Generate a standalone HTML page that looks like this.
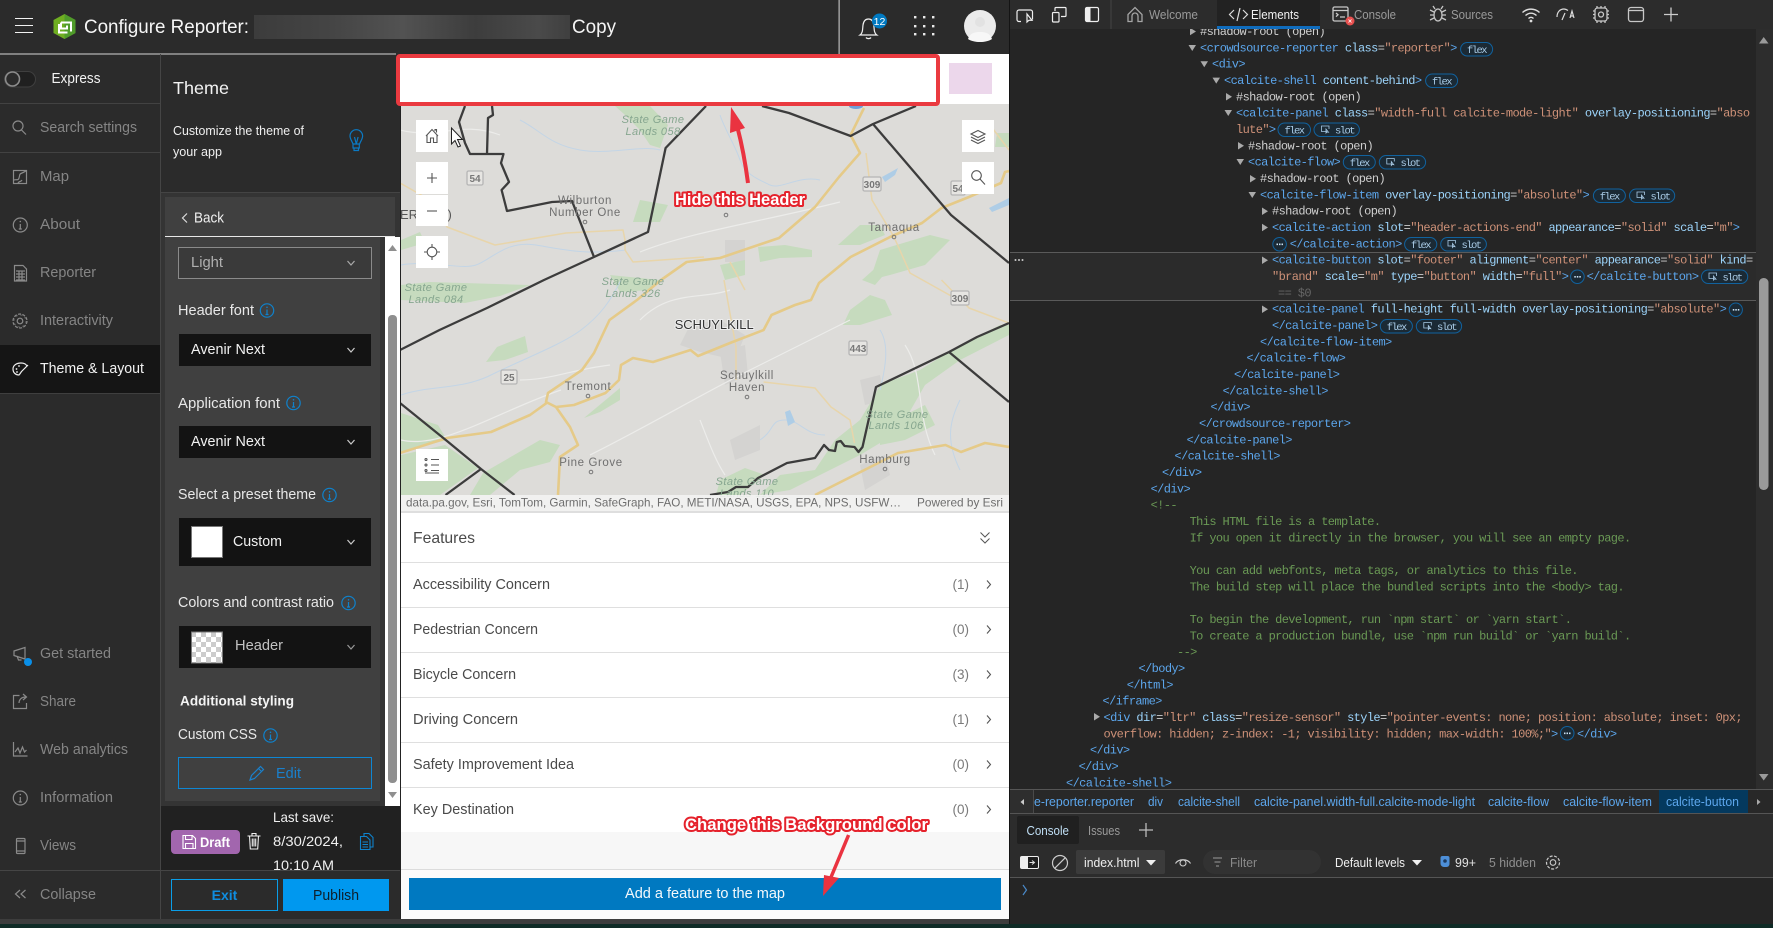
<!DOCTYPE html>
<html lang="en"><head><meta charset="utf-8"><title>Configure Reporter</title>
<style>
html,body{margin:0;padding:0;background:#252525;overflow:hidden;width:1773px;height:928px}
svg{display:block}
text{font-family:"Liberation Sans",sans-serif;white-space:pre}
.n{font-size:14.5px;fill:#858585}
.w{fill:#f2f2f2;font-size:14.5px}
.lb{fill:#e8e8e8;font-size:14.5px}
.m{font-family:"Liberation Mono",monospace;font-size:12px;letter-spacing:-.62px;fill:#cfcfcf;transform:translateY(-.6px)}
.t{fill:#5ca6ec}.a{fill:#9cd4fb}.v{fill:#ce9178}.c{fill:#6a9955}
.pt{font-family:"Liberation Mono",monospace;font-size:10.5px;letter-spacing:-1.55px;fill:#a9cbe6}
.p{fill:#1b2a35;stroke:#11629e;stroke-width:1}
.ml{font-size:11.5px;fill:#6f6f6f;letter-spacing:.6px}
.gl{font-size:11px;fill:#86a68f;font-style:italic;letter-spacing:.4px}
.sh{font-size:10px;font-weight:bold;fill:#777;text-anchor:middle}
.r{font-size:14.5px;fill:#4a4a4a}
.ct{font-size:14px;fill:#7a7a7a}
.an{font-size:16.5px;font-weight:bold;fill:#fff;stroke:#e5222c;stroke-width:4px;paint-order:stroke;stroke-linejoin:round}
.ic{fill:none;stroke:#8a8a8a;stroke-width:1.2}
.iw{fill:none;stroke:#eee;stroke-width:1.2}
.id{fill:none;stroke:#c8c8c8;stroke-width:1.3}
.mp{fill:none;stroke:#555;stroke-width:1.1}
.ib{fill:none;stroke:#0f82cc;stroke-width:1.2}
.h{fill:none;stroke:#e5ca88;stroke-width:2.6;stroke-linejoin:round}
.h2{fill:none;stroke:#e8d5aa;stroke-width:1.5;stroke-linejoin:round}
.bd{fill:none;stroke:#3c3c3c;stroke-width:2.3;stroke-linejoin:round}
.riv{fill:none;stroke:#c3d5e6;stroke-width:1}
.rd{fill:none;stroke:#ececea;stroke-width:1.2}
.gp{fill:#c6dbbe}
.twn{fill:#d4d3d1}
.dt{fill:#aaa}
.tab{font-size:12.5px;fill:#9a9a9a}
.d{font-size:12.5px;fill:#5ca6ec}
</style></head>
<body>
<svg width="1773" height="928" viewBox="0 0 1773 928" xmlns="http://www.w3.org/2000/svg">
<defs>
<linearGradient id="blr" x1="0" x2="1" y1="0" y2="0"><stop offset="0" stop-color="#3c3c3c"/><stop offset=".25" stop-color="#454545"/><stop offset=".47" stop-color="#525252"/><stop offset=".7" stop-color="#3d3d3d"/><stop offset=".9" stop-color="#4a4a4a"/><stop offset="1" stop-color="#3f3f3f"/></linearGradient>
<pattern id="chk" width="10" height="10" patternUnits="userSpaceOnUse" x="191" y="632"><rect width="10" height="10" fill="#fff"/><rect width="5" height="5" fill="#ccc"/><rect x="5" y="5" width="5" height="5" fill="#ccc"/></pattern>
<path id="td" d="M0 0h7.5l-3.75 6z" fill="#aaa"/>
<path id="tr" d="M0 0l6 3.75l-6 3.75z" fill="#aaa"/>
<clipPath id="mapc"><rect x="401" y="104" width="608" height="409"/></clipPath>
<clipPath id="sv"><rect x="161" y="806" width="239" height="64"/></clipPath>
</defs>

<!-- base -->
<rect width="1773" height="928" fill="#252525"/>
<rect y="0" width="1009" height="919" fill="#2b2b2b"/>

<!-- top header -->
<rect width="1009" height="54" fill="#2b2b2b"/>
<rect x="0" y="53.5" width="396" height="1" fill="#d4d4d4"/>
<path d="M15 18.5h18M15 25.5h18M15 32.5h18" stroke="#f2f2f2" stroke-width="1.1"/>
<polygon points="64.5,14 75.5,20 75.5,33 64.5,39 53.5,33 53.5,20" fill="#6fae21"/>
<polygon points="64.5,14 75.5,20 75.5,33 64.5,39" fill="#4f9b2a"/>
<path d="M61 22.5h10v9M59 24v8.5h8.5M61 22.5v6h6v-3" fill="none" stroke="#fff" stroke-width="2"/>
<text x="84" y="33" font-size="19.5" fill="#f6f6f6" textLength="165" lengthAdjust="spacingAndGlyphs">Configure Reporter:</text>
<rect x="254" y="15" width="316" height="24" fill="url(#blr)"/>
<text x="572" y="33" font-size="19.5" fill="#f4f4f4" textLength="44" lengthAdjust="spacingAndGlyphs">Copy</text>
<rect x="838.6" y="0" width="1" height="54" fill="#d8d8d8"/>
<path d="M860 35c3-2 2.500-6 3-10 .6-4 2.500-6 5.500-6s4.700 2 5.300 6c.5 4 0 8 3 10zM866 37.500c1 1.500 4 1.500 5 0" fill="none" stroke="#f0f0f0" stroke-width="1.200"/>
<circle cx="879.5" cy="21" r="7.5" fill="#0079c1"/>
<text x="879.5" y="24.8" font-size="10.5" fill="#fff" text-anchor="middle">12</text>
<g fill="#eaeaea"><rect x="914" y="16" width="2.4" height="2.4"/><rect x="923" y="16" width="2.4" height="2.4"/><rect x="932" y="16" width="2.4" height="2.4"/><rect x="914" y="25" width="2.4" height="2.4"/><rect x="923" y="25" width="2.4" height="2.4"/><rect x="932" y="25" width="2.4" height="2.4"/><rect x="914" y="33" width="2.4" height="2.4"/><rect x="923" y="33" width="2.4" height="2.4"/><rect x="932" y="33" width="2.4" height="2.4"/></g>
<circle cx="980" cy="26" r="16" fill="#ebebeb"/>
<path d="M968 39c2-6 7-7 12-7s10 1 12 7c-6 4-18 4-24 0z" fill="#f7f7f7"/>
<circle cx="980" cy="22" r="5" fill="#e2e2e2"/>

<!-- left nav -->
<rect x="160" y="54" width="1" height="865" fill="#454545"/>
<rect x="0" y="103" width="160" height="1" fill="#424242"/>
<rect x="0" y="152" width="160" height="1" fill="#424242"/>
<rect x="4.5" y="71.5" width="31" height="15.5" rx="7.7" fill="#202020" stroke="#3f3f3f"/>
<circle cx="12.5" cy="79" r="7" fill="#2b2b2b" stroke="#8c8c8c" stroke-width="1.6"/>
<text x="51.500" y="83" class="w" textLength="49" lengthAdjust="spacingAndGlyphs">Express</text>
<circle cx="18" cy="126" r="5" class="ic"/><path d="M21.5 130l4.5 4.5" class="ic"/>
<text x="40" y="132" class="n" textLength="97" lengthAdjust="spacingAndGlyphs">Search settings</text>
<rect x="13.5" y="170.5" width="13" height="13" class="ic"/><path d="M14 180c3-1 4 1 5-2s0-4 3-5 3-2 4-2M18 183c1-2 3-1 4-3" class="ic"/>
<text x="40" y="181" class="n" textLength="29" lengthAdjust="spacingAndGlyphs">Map</text>
<circle cx="20.3" cy="225" r="7" class="ic"/><path d="M20.3 224v5M18.8 229h3" class="ic"/><circle cx="20.3" cy="221.5" r=".8" fill="#8a8a8a"/>
<text x="40" y="229" class="n" textLength="40" lengthAdjust="spacingAndGlyphs">About</text>
<path d="M14.5 265.5h8.5l3.5 3.5v12h-12z" class="ic"/><path d="M16 271h9M16 274h9M16 277h9M16 280h9M19 271v9M22 271v9" class="ic" stroke-width=".8"/>
<text x="40" y="277" class="n" textLength="56" lengthAdjust="spacingAndGlyphs">Reporter</text>
<circle cx="20" cy="321" r="2.8" class="ic"/><circle cx="20" cy="321" r="6" class="ic" stroke-width="3.2" stroke-dasharray="2.4 2.3" opacity=".45"/><circle cx="20" cy="321" r="7" class="ic" stroke-dasharray="3 1.4"/>
<text x="40" y="325" class="n" textLength="73" lengthAdjust="spacingAndGlyphs">Interactivity</text>
<rect x="0" y="345" width="160" height="48" fill="#151515"/>
<path d="M13 369c0-4 4-6 8-6 3 0 5 1 6 3l-5 5c-1 1-2 3-3 4-3 0-6-2-6-6zM21 372l7-7" class="iw"/><circle cx="16.5" cy="369" r=".9" fill="#eee"/><circle cx="19" cy="366" r=".9" fill="#eee"/><circle cx="17" cy="372" r=".9" fill="#eee"/>
<text x="40" y="373" class="w" textLength="104" lengthAdjust="spacingAndGlyphs">Theme &amp; Layout</text>
<rect x="0" y="393" width="160" height="1" fill="#3f3f3f"/>
<path d="M14 651l11-3.500v11.500l-11-3.500zM17 656l1.500 4h3" class="ic"/>
<circle cx="28" cy="662" r="4" fill="#0a8fe8"/>
<text x="40" y="658" class="n" textLength="71" lengthAdjust="spacingAndGlyphs">Get started</text>
<path d="M26.500 703v5.500h-13v-13h6" class="ic"/><path d="M19 703c0-3 2-6 7-6M23 694l3.500 3-3.500 3" class="ic"/>
<text x="40" y="706" class="n" textLength="36" lengthAdjust="spacingAndGlyphs">Share</text>
<path d="M13.500 742v14h14M15 752l3-4 2 5 2.500-6 2 5 2-2" class="ic"/>
<text x="40" y="754" class="n" textLength="88" lengthAdjust="spacingAndGlyphs">Web analytics</text>
<circle cx="20.3" cy="798" r="7" class="ic"/><path d="M20.3 797v5M18.8 802h3" class="ic"/><circle cx="20.3" cy="794.5" r=".8" fill="#8a8a8a"/>
<text x="40" y="802" class="n" textLength="73" lengthAdjust="spacingAndGlyphs">Information</text>
<rect x="16.5" y="838.5" width="8.5" height="15" rx="1" class="ic"/><path d="M16.500 841h8.500M16.500 851h8.500" class="ic"/>
<text x="40" y="850" class="n" textLength="36" lengthAdjust="spacingAndGlyphs">Views</text>
<rect x="0" y="870" width="400" height="1" fill="#454545"/>
<path d="M20 890l-4.500 4 4.500 4M25.500 890l-4.500 4 4.500 4" class="ic"/>
<text x="40" y="899" class="n" textLength="56" lengthAdjust="spacingAndGlyphs">Collapse</text>

<!-- theme column -->
<text x="173" y="94" font-size="17.5" fill="#f2f2f2" textLength="56" lengthAdjust="spacingAndGlyphs">Theme</text>
<text x="173" y="135" font-size="13" fill="#efefef" textLength="131" lengthAdjust="spacingAndGlyphs">Customize the theme of</text>
<text x="173" y="156" font-size="13" fill="#efefef" textLength="49" lengthAdjust="spacingAndGlyphs">your app</text>
<path d="M353 144c-1-3-3-5-3-8a6.300 6.300 0 0 1 12.600 0c0 3-2 5-3 8zM353 144v4h6.300v-4M354 148v2.500h4.500v-2.500M354.500 137l1.800 7 1.800-7" fill="none" stroke="#0b7ac4" stroke-width="1.200"/>
<rect x="161" y="192" width="239" height="1" fill="#444"/>
<rect x="161" y="193" width="239" height="613" fill="#343434"/>
<rect x="165" y="197" width="230" height="39" fill="#404040"/>
<rect x="165" y="236" width="230" height="1" fill="#e8e8e8"/>
<path d="M187 213.500l-4.500 4.500 4.500 4.500" fill="none" stroke="#ddd" stroke-width="1.200"/>
<text x="194" y="222.500" font-size="14.500" fill="#f0f0f0" textLength="30" lengthAdjust="spacingAndGlyphs">Back</text>
<rect x="165" y="237" width="215" height="564" fill="#404040"/>
<rect x="385" y="237" width="15" height="569" fill="#fff"/>
<rect x="388" y="315" width="9" height="468" rx="4" fill="#8f8f8f"/>
<polygon points="392.500,245 397,251 388,251" fill="#8f8f8f"/>
<polygon points="388,792 397,792 392.500,798" fill="#8f8f8f"/>

<rect x="178.500" y="247.500" width="193" height="31" fill="#3a3a3a" stroke="#8a8a8a"/>
<text x="191" y="267" font-size="14.500" fill="#b0b0b0" textLength="32" lengthAdjust="spacingAndGlyphs">Light</text>
<path d="M347.500 261l3.500 4 3.500-4" fill="none" stroke="#aaa" stroke-width="1.200"/>

<text x="178" y="315" class="lb" textLength="76" lengthAdjust="spacingAndGlyphs">Header font</text>
<circle cx="267" cy="310.500" r="6.700" class="ib"/><path d="M267 309.500v5M265.500 314.500h3" class="ib"/><circle cx="267" cy="307.300" r=".8" fill="#0f82cc"/>
<rect x="179" y="334" width="192" height="32" fill="#131313"/>
<text x="191" y="354" font-size="14.500" fill="#f2f2f2" textLength="74" lengthAdjust="spacingAndGlyphs">Avenir Next</text>
<path d="M347.500 348l3.500 4 3.500-4" fill="none" stroke="#ccc" stroke-width="1.200"/>

<text x="178" y="408" class="lb" textLength="102" lengthAdjust="spacingAndGlyphs">Application font</text>
<circle cx="293.500" cy="403" r="6.700" class="ib"/><path d="M293.500 402v5M292 407h3" class="ib"/><circle cx="293.500" cy="399.800" r=".8" fill="#0f82cc"/>
<rect x="179" y="426" width="192" height="32" fill="#131313"/>
<text x="191" y="446" font-size="14.500" fill="#f2f2f2" textLength="74" lengthAdjust="spacingAndGlyphs">Avenir Next</text>
<path d="M347.500 440l3.500 4 3.500-4" fill="none" stroke="#ccc" stroke-width="1.200"/>

<text x="178" y="499" class="lb" textLength="138" lengthAdjust="spacingAndGlyphs">Select a preset theme</text>
<circle cx="329.500" cy="495" r="6.700" class="ib"/><path d="M329.500 494v5M328 499h3" class="ib"/><circle cx="329.500" cy="491.800" r=".8" fill="#0f82cc"/>
<rect x="179" y="518" width="192" height="48" fill="#131313"/>
<rect x="191.500" y="526.500" width="31" height="31" fill="#fff" stroke="#777"/>
<text x="233" y="546" font-size="14.500" fill="#f2f2f2" textLength="49" lengthAdjust="spacingAndGlyphs">Custom</text>
<path d="M347.500 540l3.500 4 3.500-4" fill="none" stroke="#ccc" stroke-width="1.200"/>

<text x="178" y="607" class="lb" textLength="156" lengthAdjust="spacingAndGlyphs">Colors and contrast ratio</text>
<circle cx="348.500" cy="603" r="6.700" class="ib"/><path d="M348.500 602v5M347 607h3" class="ib"/><circle cx="348.500" cy="599.800" r=".8" fill="#0f82cc"/>
<rect x="179" y="626" width="192" height="42" fill="#131313"/>
<rect x="191.500" y="632" width="31" height="31" fill="url(#chk)" stroke="#777"/>
<text x="235" y="650" font-size="14.500" fill="#c2c2c2" textLength="48" lengthAdjust="spacingAndGlyphs">Header</text>
<path d="M347.500 645l3.500 4 3.500-4" fill="none" stroke="#999" stroke-width="1.200"/>

<text x="180" y="705.500" font-size="14" font-weight="bold" fill="#f4f4f4" textLength="114" lengthAdjust="spacingAndGlyphs">Additional styling</text>
<text x="178" y="739" class="lb" textLength="79" lengthAdjust="spacingAndGlyphs">Custom CSS</text>
<circle cx="270.500" cy="735.500" r="6.700" class="ib"/><path d="M270.500 734.500v5M269 739.500h3" class="ib"/><circle cx="270.500" cy="732.300" r=".8" fill="#0f82cc"/>
<rect x="178.500" y="757.500" width="193" height="31" fill="none" stroke="#0e87d4"/>
<path d="M250 780l1.500-4.500 9-9 3 3-9 9zM258.500 768.500l3 3" fill="none" stroke="#1a80cc" stroke-width="1.200"/>
<text x="276" y="778" font-size="14.500" fill="#1a80cc" textLength="25" lengthAdjust="spacingAndGlyphs">Edit</text>

<!-- draft -->
<rect x="161" y="806" width="239" height="64" fill="#212121"/>
<rect x="171" y="830" width="69" height="24" rx="4" fill="#a266ae"/>
<path d="M183 835.500h9.500l3 3v10h-12.500zM185.500 835.500v4h6.500v-4M185.500 848.500v-5h7.500v5" fill="none" stroke="#fff" stroke-width="1.100"/>
<text x="200" y="847" font-size="14" font-weight="bold" fill="#fff" textLength="30" lengthAdjust="spacingAndGlyphs">Draft</text>
<path d="M247.500 836h13M252 836v-2.500h4v2.500M249.500 836l.8 13h7.400l.8-13M252.300 838.500v8M254 838.500v8M255.700 838.500v8" fill="none" stroke="#eee" stroke-width="1.100"/>
<g clip-path="url(#sv)">
<text x="273" y="822" font-size="14" fill="#f0f0f0" textLength="61" lengthAdjust="spacingAndGlyphs">Last save:</text>
<text x="273" y="846" font-size="14" fill="#f0f0f0" textLength="70" lengthAdjust="spacingAndGlyphs">8/30/2024,</text>
<text x="273" y="870" font-size="14" fill="#f0f0f0" textLength="61" lengthAdjust="spacingAndGlyphs">10:10 AM</text>
</g>
<path d="M364 836v-2.500h5l4 4v9.500h-3M360.500 836.500h6l3.500 3.500v9.500h-9.500zM362.500 842h5.500M362.500 844.500h5.500M362.500 847h5.500" fill="none" stroke="#0f82cc" stroke-width="1.100"/>

<!-- footer -->
<rect x="171.500" y="879.500" width="106" height="31" fill="none" stroke="#0a9ee8"/>
<text x="224.500" y="900" font-size="14" font-weight="bold" fill="#0f8de0" text-anchor="middle">Exit</text>
<rect x="283" y="879" width="106" height="32" fill="#0098ef"/>
<text x="313" y="900" font-size="14.500" fill="#0e1e2a" textLength="46" lengthAdjust="spacingAndGlyphs">Publish</text>

<!-- map -->
<rect x="400" y="54" width="1" height="865" fill="#222"/>
<rect x="401" y="54" width="608" height="865" fill="#fff"/>
<g clip-path="url(#mapc)">
<rect x="401" y="104" width="608" height="409" fill="#dddcd9"/>
<polygon class="twn" points="690,325 720,320 745,335 735,360 700,352 680,345"/>
<polygon class="twn" points="720,352 745,345 748,375 725,385"/>
<polygon class="twn" points="725,240 745,240 745,262 725,262"/>
<polygon class="twn" points="860,380 880,375 885,400 865,405"/>
<polygon class="twn" points="730,440 760,425 760,450 735,460"/>
<polygon class="twn" points="860,465 885,455 890,475 865,490"/>
<polygon class="gp" points="615,106 650,106 668,125 660,148 650,145 640,130 625,115"/>
<polygon class="gp" points="401,413 438,425 447,440 401,452"/>
<polygon class="gp" points="401,455 445,445 478,468 440,495 401,495"/>
<polygon class="gp" points="483,473 540,440 560,445 550,462 520,470 490,495 470,495"/>
<polygon class="gp" points="497,347 525,336 528,352 505,360 486,362"/>
<polygon class="gp" points="584,418 620,388 620,400 600,412"/>
<polygon class="gp" points="815,470 835,440 860,420 875,395 880,385 920,370 955,348 1000,325 1009,325 1009,335 960,360 925,385 905,420 885,440 860,455 830,470 790,490 760,495 780,475"/>
<polygon class="gp" points="843,325 850,310 870,295 885,300 892,315 860,325"/>
<polygon class="gp" points="838,245 860,225 880,225 885,235 860,245"/>
<polygon class="gp" points="880,250 930,235 950,240 925,265 890,275 870,280"/>
<polygon class="gp" points="758,247 785,245 812,250 812,257 780,258 760,262"/>
<polygon class="gp" points="401,285 430,282 530,285 500,296 465,303 401,300"/>
<polygon class="gp" points="610,275 660,280 650,290 620,292"/>
<polygon class="gp" points="997,133 1009,133 1009,147 995,147"/>
<polygon class="gp" points="716,495 720,480 745,468 765,475 740,495"/>
<polygon class="gp" points="633,222 640,200 668,205 660,222"/>
<polygon class="gp" points="720,265 745,260 745,275 725,280"/>
<polygon class="gp" points="862,280 890,255 895,262 875,285"/>
<polygon class="gp" points="401,240 420,232 425,243 401,250"/>
<polygon class="gp" points="880,430 905,415 925,405 935,425 905,440 880,445"/>
<path class="riv" d="M401 265c30-5 60 5 75 0s30-25 60-20 50 10 90 5M520 120c20 10 30 25 60 30s60-5 80 0M720 115c5 15 15 30 20 45s20 20 30 25 30-10 50-5M401 395c30-10 60-5 90-20s70-30 90-45 30-30 40-50M760 440c15-10 10-20 25-20s20 15 40 15M880 330c10 15 5 40 0 60M960 400c-10 20-15 40 0 70"/>
<path class="rd" d="M401 440c40 10 100-30 160-50M590 455c60-30 110-60 160-85 40-20 70-35 100-50M700 420c8 20 15 40 25 55M640 252c50-20 120-30 200-50M520 380c30 0 50-10 90-15M400 130c40 10 60-10 100 5M905 345c20 30 10 70 30 110M640 320c30-30 60-20 90-30"/>
<polygon points="882,177 898,168 895,175 885,182" fill="#aecde6"/>
<polygon points="989,208 1009,198 1009,205 992,212" fill="#aecde6"/>
<polygon points="785,412 790,410 795,422 788,426" fill="#aecde6"/>
<ellipse cx="856" cy="106" rx="7" ry="3" fill="#6f9fd8"/>

<path class="h2" d="M400 183L430 200L447 227L495 245L566 233L623 230L625 240L625 250L633 262L704 257"/>
<path class="h2" d="M763.600 382L815 388L831 407L850 420L854.500 443"/>
<path class="h2" d="M724 280L736 347L736 380M941.500 280L969 308L1009 323M866 153L872 200L894 237L910 273L953 297M730 262L745 290M990 125L1009 150"/>
<path class="h" d="M864 108L850.600 135L860 153L839 177L815 207L779 238L720 258L686.600 262L661 280L637 300L609.500 320L594 353L582 370L548 393L546 402L556 407L574 405L605.500 393L619 380L621 365L633 358L653 362L690.500 350L698 356L730 343L763.600 330L771.500 315L795 305L811 300L819 283L850.600 257L890 237L922 223L941.500 208L969 197L1001 183L1005 172L1009 171"/>
<path class="h" d="M556 407L570 427L578 445L560 457L558 495M548 402L530 415L491 432L447 438L400 453M1009 447L985 443L961 452L945.500 445L898 453L815 495"/>

<path class="bd" d="M465 106L459 122L465 143L470 154L503.500 154L501 163L509 182L501.600 190L507 211L552 202L572 201L594 257"/>
<path class="bd" d="M492 106L493 115L488 118L487 154"/>
<path class="bd" d="M706 106L665.600 148L648 232L594 257L544 280L487 308L439.500 330L400 350"/>
<path class="bd" d="M762 106L789 113L850.600 136L873 124L916 106"/>
<path class="bd" d="M873 124L951 215L1009 263"/>
<path class="bd" d="M400 403L447 441L481 469L514.600 495"/>
<path class="bd" d="M481 469L445.500 495"/>
<path class="bd" d="M1009 323L977 337L949 352L876 387L862.500 447L858.500 452L854.500 447L844.600 446L840.700 441L836.800 442L835 451L829 450L824 445L815 458L787 463L758 478L748 487L736 487L728 492L710 495"/>
<path class="bd" d="M949 352L1009 402"/>

<text x="653" y="123" class="gl" text-anchor="middle">State Game</text>
<text x="653" y="135" class="gl" text-anchor="middle">Lands 058</text>
<text x="436" y="291" class="gl" text-anchor="middle">State Game</text>
<text x="436" y="303" class="gl" text-anchor="middle">Lands 084</text>
<text x="633" y="285" class="gl" text-anchor="middle">State Game</text>
<text x="633" y="297" class="gl" text-anchor="middle">Lands 326</text>
<text x="897" y="418" class="gl" text-anchor="middle">State Game</text>
<text x="896" y="429" class="gl" text-anchor="middle">Lands 106</text>
<text x="747" y="485" class="gl" text-anchor="middle">State Game</text>
<text x="747" y="497" class="gl" text-anchor="middle">Lands 110</text>
<text x="585" y="204" class="ml" text-anchor="middle">Wilburton</text>
<text x="585" y="216" class="ml" text-anchor="middle">Number One</text>
<text x="674.700" y="329" font-size="13" fill="#333" stroke="#eee" stroke-width="2" paint-order="stroke" textLength="79" lengthAdjust="spacingAndGlyphs">SCHUYLKILL</text>
<text x="894" y="231" class="ml" text-anchor="middle">Tamaqua</text>
<text x="588" y="390" class="ml" text-anchor="middle">Tremont</text>
<text x="747" y="379" class="ml" text-anchor="middle">Schuylkill</text>
<text x="747" y="391" class="ml" text-anchor="middle">Haven</text>
<text x="591" y="466" class="ml" text-anchor="middle">Pine Grove</text>
<text x="885" y="463" class="ml" text-anchor="middle">Hamburg</text>
<text x="400" y="219" font-size="13" fill="#555">ER</text>
<text x="447.500" y="219" font-size="13" fill="#555">)</text>
<circle cx="588" cy="396" r="1.800" fill="none" stroke="#777"/>
<circle cx="747" cy="397" r="1.800" fill="none" stroke="#777"/>
<circle cx="591" cy="472" r="1.800" fill="none" stroke="#777"/>
<circle cx="885" cy="469" r="1.800" fill="none" stroke="#777"/>
<circle cx="894" cy="237" r="1.800" fill="none" stroke="#777"/>
<circle cx="585" cy="222" r="1.800" fill="none" stroke="#777"/>
<circle cx="726" cy="215" r="1.800" fill="none" stroke="#777"/>

<g fill="#e6e5e2" stroke="#b5b5b5" stroke-width="1.300">
<rect x="467" y="171" width="16" height="14" rx="1.500"/>
<rect x="863" y="177" width="18" height="14" rx="1.500"/>
<rect x="951" y="181" width="14" height="14" rx="1.500"/>
<rect x="951" y="291" width="18" height="14" rx="1.500"/>
<rect x="849" y="341" width="18" height="14" rx="1.500"/>
<rect x="501" y="370" width="16" height="14" rx="1.500"/>
</g>
<text x="475" y="182" class="sh">54</text>
<text x="872" y="188" class="sh">309</text>
<text x="958" y="192" class="sh">54</text>
<text x="960" y="302" class="sh">309</text>
<text x="858" y="352" class="sh">443</text>
<text x="509" y="381" class="sh">25</text>

<rect x="401" y="495" width="608" height="16" fill="#f4f4f2" opacity=".88"/>
<text x="406" y="506.500" font-size="12" fill="#6e6e6e" textLength="495" lengthAdjust="spacingAndGlyphs">data.pa.gov, Esri, TomTom, Garmin, SafeGraph, FAO, METI/NASA, USGS, EPA, NPS, USFW…</text>
<text x="917" y="506.500" font-size="12" fill="#6e6e6e" textLength="86" lengthAdjust="spacingAndGlyphs">Powered by Esri</text>
<rect x="401" y="511" width="608" height="3" fill="#dedede"/>
</g>

<!-- map widgets -->
<g fill="#fff">
<rect x="416" y="120" width="32" height="32"/>
<rect x="416" y="162" width="32" height="32"/>
<rect x="416" y="195" width="32" height="31"/>
<rect x="416" y="236" width="32" height="32"/>
<rect x="416" y="449" width="32" height="32"/>
<rect x="962" y="120" width="32" height="32"/>
<rect x="962" y="162" width="32" height="32"/>
</g>
<path d="M426 136l6-6.500 6 6.500M427 135v7.500h3.500v-4.500h3v4.500h3.500v-7.500M435 131v-1.500h1.500v3" class="mp"/>
<path d="M432 173v10M427 178h10" class="mp"/>
<path d="M427 211h10" class="mp"/>
<circle cx="432" cy="252" r="4.800" class="mp"/><path d="M432 244v3M432 257v3M424 252h3M437 252h3" class="mp"/>
<circle cx="426" cy="459.500" r="1" class="mp"/><circle cx="426" cy="465" r="1" class="mp"/><circle cx="426" cy="470.500" r="1" class="mp"/><path d="M431 459.500h8M431 465h8M431 470.500h8M425 473h14" class="mp"/>
<path d="M978 130.500l7 3.500-7 3.500-7-3.500zM971 137l7 3.500 7-3.500M971 140l7 3.500 7-3.500" class="mp"/>
<circle cx="976.500" cy="175.500" r="4.800" class="mp"/><path d="M980 179l5 5.500" class="mp"/>
<path d="M451.500 128v16l3.500-3.500 3 6.500 2.500-1-3-6.500h5z" fill="#fff" stroke="#222" stroke-width="1"/>

<!-- features -->
<rect x="401" y="514" width="608" height="318" fill="#fff"/>
<text x="413" y="543" font-size="16" fill="#4a4a4a" textLength="62" lengthAdjust="spacingAndGlyphs">Features</text>
<path d="M980.500 532.500l4.500 4.500 4.500-4.500M980.500 538.500l4.500 4.500 4.500-4.500" fill="none" stroke="#555" stroke-width="1"/>
<g fill="#dfdfdf"><rect x="401" y="562" width="608" height="1"/><rect x="401" y="607" width="608" height="1"/><rect x="401" y="652" width="608" height="1"/><rect x="401" y="697" width="608" height="1"/><rect x="401" y="742" width="608" height="1"/><rect x="401" y="787" width="608" height="1"/></g>
<text x="413" y="589" class="r" textLength="137" lengthAdjust="spacingAndGlyphs">Accessibility Concern</text>
<text x="413" y="634" class="r" textLength="125" lengthAdjust="spacingAndGlyphs">Pedestrian Concern</text>
<text x="413" y="679" class="r" textLength="103" lengthAdjust="spacingAndGlyphs">Bicycle Concern</text>
<text x="413" y="724" class="r" textLength="105" lengthAdjust="spacingAndGlyphs">Driving Concern</text>
<text x="413" y="769" class="r" textLength="161" lengthAdjust="spacingAndGlyphs">Safety Improvement Idea</text>
<text x="413" y="814" class="r" textLength="101" lengthAdjust="spacingAndGlyphs">Key Destination</text>
<text x="952.500" y="589" class="ct" textLength="16.500" lengthAdjust="spacingAndGlyphs">(1)</text>
<text x="952.500" y="634" class="ct" textLength="16.500" lengthAdjust="spacingAndGlyphs">(0)</text>
<text x="952.500" y="679" class="ct" textLength="16.500" lengthAdjust="spacingAndGlyphs">(3)</text>
<text x="952.500" y="724" class="ct" textLength="16.500" lengthAdjust="spacingAndGlyphs">(1)</text>
<text x="952.500" y="769" class="ct" textLength="16.500" lengthAdjust="spacingAndGlyphs">(0)</text>
<text x="952.500" y="814" class="ct" textLength="16.500" lengthAdjust="spacingAndGlyphs">(0)</text>
<path d="M987 580.500l3.500 4-3.500 4M987 625.500l3.500 4-3.500 4M987 670.500l3.500 4-3.500 4M987 715.500l3.500 4-3.500 4M987 760.500l3.500 4-3.500 4M987 805.500l3.500 4-3.500 4" fill="none" stroke="#555" stroke-width="1.100"/>
<rect x="401" y="832" width="608" height="37" fill="#f7f7f7"/>
<rect x="401" y="869" width="608" height="1" fill="#dcdcdc"/>
<rect x="401" y="870" width="608" height="49" fill="#fbfbfb"/>
<rect x="409" y="878" width="592" height="32" fill="#0079c1"/>
<text x="625" y="898" font-size="14.500" fill="#f4f9fc" textLength="160" lengthAdjust="spacingAndGlyphs">Add a feature to the map</text>

<!-- annotation: header box -->
<rect x="398" y="56" width="540" height="48" rx="2" fill="#fff" stroke="#ea3a40" stroke-width="4"/>
<rect x="949" y="63" width="43" height="31" fill="#ecd7eb"/>
<path d="M748 183C745 160 741 140 736 122" fill="none" stroke="#ea3340" stroke-width="4"/>
<polygon points="731,107 745,128 730,133" fill="#ea3340"/>
<text x="675" y="205" class="an" textLength="130" lengthAdjust="spacingAndGlyphs">Hide this Header</text>
<path d="M848.600 835L829 882" fill="none" stroke="#ea3340" stroke-width="3.500"/>
<polygon points="823,896 824,875 839,878" fill="#ea3340"/>
<text x="685" y="830" class="an" textLength="243" lengthAdjust="spacingAndGlyphs">Change this Background color</text>

<!-- bottom band -->
<rect x="0" y="919" width="1773" height="9" fill="#3d3d3d"/>
<rect x="0" y="924" width="1773" height="4" fill="#0f2b26"/>

<!-- devtools -->
<rect x="1009" y="0" width="764" height="924" fill="#252525"/>
<rect x="1009" y="0" width="1" height="924" fill="#141414"/>
<rect x="1010" y="252" width="746" height="48" fill="#2b2b2b"/>
<rect x="1010" y="252" width="746" height="1" fill="#5a5a5a"/>
<rect x="1010" y="300" width="746" height="1" fill="#5a5a5a"/>
<circle cx="1015.500" cy="260" r="1" fill="#ccc"/><circle cx="1019" cy="260" r="1" fill="#ccc"/><circle cx="1022.500" cy="260" r="1" fill="#ccc"/>

<use href="#tr" x="1190" y="27.800"/>
<use href="#td" x="1188.500" y="45"/>
<use href="#td" x="1200.500" y="61.200"/>
<use href="#td" x="1212.500" y="77.600"/>
<use href="#tr" x="1226" y="93"/>
<use href="#td" x="1224.500" y="110"/>
<use href="#tr" x="1238" y="142"/>
<use href="#td" x="1236.500" y="159"/>
<use href="#tr" x="1250" y="175"/>
<use href="#td" x="1248.500" y="192"/>
<use href="#tr" x="1262" y="207.500"/>
<use href="#tr" x="1262" y="223.800"/>
<use href="#tr" x="1262" y="256.500"/>
<use href="#tr" x="1262" y="305.500"/>
<use href="#tr" x="1094" y="713"/>

<text class="m" x="1200" y="35.600">#shadow-root (open)</text>
<text class="m" x="1200" y="52"><tspan class="t">&lt;crowdsource-reporter</tspan> <tspan class="a">class</tspan>=<tspan class="v">"reporter"</tspan><tspan class="t">&gt;</tspan></text>
<text class="m t" x="1212" y="68.300">&lt;div&gt;</text>
<text class="m" x="1224" y="84.700"><tspan class="t">&lt;calcite-shell</tspan> <tspan class="a">content-behind</tspan><tspan class="t">&gt;</tspan></text>
<text class="m" x="1236" y="101">#shadow-root (open)</text>
<text class="m" x="1236" y="117.300"><tspan class="t">&lt;calcite-panel</tspan> <tspan class="a">class</tspan>=<tspan class="v">"width-full calcite-mode-light"</tspan> <tspan class="a">overlay-positioning</tspan>=<tspan class="v">"abso</tspan></text>
<text class="m" x="1236" y="133.600"><tspan class="v">lute"</tspan><tspan class="t">&gt;</tspan></text>
<text class="m" x="1248" y="150">#shadow-root (open)</text>
<text class="m t" x="1248" y="166.300">&lt;calcite-flow&gt;</text>
<text class="m" x="1260" y="182.600">#shadow-root (open)</text>
<text class="m" x="1260" y="199"><tspan class="t">&lt;calcite-flow-item</tspan> <tspan class="a">overlay-positioning</tspan>=<tspan class="v">"absolute"</tspan><tspan class="t">&gt;</tspan></text>
<text class="m" x="1272" y="215.300">#shadow-root (open)</text>
<text class="m" x="1272" y="231.600"><tspan class="t">&lt;calcite-action</tspan> <tspan class="a">slot</tspan>=<tspan class="v">"header-actions-end"</tspan> <tspan class="a">appearance</tspan>=<tspan class="v">"solid"</tspan> <tspan class="a">scale</tspan>=<tspan class="v">"m"</tspan><tspan class="t">&gt;</tspan></text>
<text class="m t" x="1289.800" y="248">&lt;/calcite-action&gt;</text>
<text class="m" x="1272" y="264.300"><tspan class="t">&lt;calcite-button</tspan> <tspan class="a">slot</tspan>=<tspan class="v">"footer"</tspan> <tspan class="a">alignment</tspan>=<tspan class="v">"center"</tspan> <tspan class="a">appearance</tspan>=<tspan class="v">"solid"</tspan> <tspan class="a">kind</tspan>=</text>
<text class="m" x="1272" y="280.600"><tspan class="v">"brand"</tspan> <tspan class="a">scale</tspan>=<tspan class="v">"m"</tspan> <tspan class="a">type</tspan>=<tspan class="v">"button"</tspan> <tspan class="a">width</tspan>=<tspan class="v">"full"</tspan><tspan class="t">&gt;</tspan></text>
<text class="m t" x="1586.600" y="280.600">&lt;/calcite-button&gt;</text>
<text class="m" x="1278" y="297" style="fill:#666">== $0</text>
<text class="m" x="1272" y="313.300"><tspan class="t">&lt;calcite-panel</tspan> <tspan class="a">full-height full-width overlay-positioning</tspan>=<tspan class="v">"absolute"</tspan><tspan class="t">&gt;</tspan></text>
<text class="m t" x="1272" y="329.600">&lt;/calcite-panel&gt;</text>
<text class="m t" x="1260" y="346">&lt;/calcite-flow-item&gt;</text>
<text class="m t" x="1246.500" y="362.300">&lt;/calcite-flow&gt;</text>
<text class="m t" x="1234" y="378.600">&lt;/calcite-panel&gt;</text>
<text class="m t" x="1222.600" y="395">&lt;/calcite-shell&gt;</text>
<text class="m t" x="1210.500" y="411.300">&lt;/div&gt;</text>
<text class="m t" x="1199" y="427.600">&lt;/crowdsource-reporter&gt;</text>
<text class="m t" x="1186.600" y="444">&lt;/calcite-panel&gt;</text>
<text class="m t" x="1174.500" y="460.300">&lt;/calcite-shell&gt;</text>
<text class="m t" x="1162" y="476.600">&lt;/div&gt;</text>
<text class="m t" x="1150.600" y="493">&lt;/div&gt;</text>
<text class="m c" x="1150.600" y="509.300">&lt;!--</text>
<text class="m c" x="1189.600" y="525.600">This HTML file is a template.</text>
<text class="m c" x="1189.600" y="542">If you open it directly in the browser, you will see an empty page.</text>
<text class="m c" x="1189.600" y="574.600">You can add webfonts, meta tags, or analytics to this file.</text>
<text class="m c" x="1189.600" y="591">The build step will place the bundled scripts into the &lt;body&gt; tag.</text>
<text class="m c" x="1189.600" y="623.600">To begin the development, run `npm start` or `yarn start`.</text>
<text class="m c" x="1189.600" y="640">To create a production bundle, use `npm run build` or `yarn build`.</text>
<text class="m c" x="1177" y="656.300">--&gt;</text>
<text class="m t" x="1138.500" y="672.600">&lt;/body&gt;</text>
<text class="m t" x="1126.800" y="689">&lt;/html&gt;</text>
<text class="m t" x="1102.500" y="705.300">&lt;/iframe&gt;</text>
<text class="m" x="1103.500" y="721.600"><tspan class="t">&lt;div</tspan> <tspan class="a">dir</tspan>=<tspan class="v">"ltr"</tspan> <tspan class="a">class</tspan>=<tspan class="v">"resize-sensor"</tspan> <tspan class="a">style</tspan>=<tspan class="v">"pointer-events: none; position: absolute; inset: 0px;</tspan></text>
<text class="m" x="1103.500" y="738"><tspan class="v">overflow: hidden; z-index: -1; visibility: hidden; max-width: 100%;"</tspan><tspan class="t">&gt;</tspan></text>
<text class="m t" x="1577" y="738">&lt;/div&gt;</text>
<text class="m t" x="1090" y="754.300">&lt;/div&gt;</text>
<text class="m t" x="1078.600" y="770.600">&lt;/div&gt;</text>
<text class="m t" x="1066" y="787">&lt;/calcite-shell&gt;</text>

<!-- pills -->
<rect class="p" x="1460.600" y="42.500" width="32" height="13.500" rx="6.700"/><text class="pt" x="1467" y="53">flex</text>
<rect class="p" x="1425.600" y="74" width="32" height="13.500" rx="6.700"/><text class="pt" x="1432" y="84.500">flex</text>
<rect class="p" x="1278" y="123" width="32.500" height="13.500" rx="6.700"/><text class="pt" x="1284.500" y="133.500">flex</text>
<rect class="p" x="1314" y="123" width="45.400" height="13.500" rx="6.700"/><text class="pt" x="1335" y="133.500">slot</text><path d="M1327 131.500h-5.500v-5.500h7.500v3M1326 129v4l1-1 1.500.2z" fill="none" stroke="#a9cbe6" stroke-width=".8"/>
<rect class="p" x="1343.300" y="155.500" width="32" height="13.500" rx="6.700"/><text class="pt" x="1349.700" y="166">flex</text>
<rect class="p" x="1379.300" y="155.500" width="46.300" height="13.500" rx="6.700"/><text class="pt" x="1400.500" y="166">slot</text><path d="M1392.300 164h-5.500v-5.500h7.500v3M1391.300 161.500v4l1-1 1.500.2z" fill="none" stroke="#a9cbe6" stroke-width=".8"/>
<rect class="p" x="1593.400" y="189" width="32" height="13.500" rx="6.700"/><text class="pt" x="1599.800" y="199.500">flex</text>
<rect class="p" x="1629.500" y="189" width="45.200" height="13.500" rx="6.700"/><text class="pt" x="1650.500" y="199.500">slot</text><path d="M1642.500 197.500h-5.500v-5.500h7.500v3M1641.500 195v4l1-1 1.500.2z" fill="none" stroke="#a9cbe6" stroke-width=".8"/>
<rect class="p" x="1272.800" y="237.500" width="13.600" height="13.500" rx="6.700"/><path d="M1276.500 244.300h6.500" stroke="#c8e0f2" stroke-width="1.600" stroke-dasharray="1.500 1"/>
<rect class="p" x="1404.600" y="237.500" width="32.200" height="13.500" rx="6.700"/><text class="pt" x="1411" y="248">flex</text>
<rect class="p" x="1440.700" y="237.500" width="45.700" height="13.500" rx="6.700"/><text class="pt" x="1461.500" y="248">slot</text><path d="M1453.500 246h-5.500v-5.500h7.500v3M1452.500 243.500v4l1-1 1.500.2z" fill="none" stroke="#a9cbe6" stroke-width=".8"/>
<rect class="p" x="1570.600" y="270" width="13.600" height="13.500" rx="6.700"/><path d="M1574.300 276.800h6.500" stroke="#c8e0f2" stroke-width="1.600" stroke-dasharray="1.500 1"/>
<rect class="p" x="1701.500" y="270" width="46.200" height="13.500" rx="6.700"/><text class="pt" x="1722.500" y="280.500">slot</text><path d="M1714.500 278.500h-5.500v-5.500h7.500v3M1713.500 276v4l1-1 1.500.2z" fill="none" stroke="#a9cbe6" stroke-width=".8"/>
<rect class="p" x="1729.200" y="303" width="13.200" height="13.500" rx="6.700"/><path d="M1732.800 309.800h6.500" stroke="#c8e0f2" stroke-width="1.600" stroke-dasharray="1.500 1"/>
<rect class="p" x="1380.300" y="319.500" width="32.100" height="13.500" rx="6.700"/><text class="pt" x="1386.700" y="330">flex</text>
<rect class="p" x="1416.300" y="319.500" width="45.300" height="13.500" rx="6.700"/><text class="pt" x="1437" y="330">slot</text><path d="M1429.300 328h-5.500v-5.500h7.500v3M1428.300 325.500v4l1-1 1.500.2z" fill="none" stroke="#a9cbe6" stroke-width=".8"/>
<rect class="p" x="1560.400" y="726.500" width="13.600" height="13.500" rx="6.700"/><path d="M1564 733.300h6.500" stroke="#c8e0f2" stroke-width="1.600" stroke-dasharray="1.500 1"/>

<!-- devtools scrollbar -->
<rect x="1756" y="29" width="17" height="760" fill="#2d2d2d"/>
<rect x="1759" y="278" width="9.500" height="212" rx="4.500" fill="#9a9a9a"/>
<polygon points="1763.700,37 1768.500,43.500 1759,43.500" fill="#9a9a9a"/>
<polygon points="1759,774 1768.500,774 1763.700,780.500" fill="#9a9a9a"/>

<!-- devtools tab bar -->
<rect x="1010" y="0" width="763" height="29" fill="#2c2c2c"/>
<rect x="1217" y="0" width="103" height="26" fill="#222"/>
<rect x="1217" y="26" width="103" height="3" fill="#0f6cbd"/>
<rect x="1110.500" y="0" width="1" height="29" fill="#444"/>
<path d="M1021 21.500h-2a2 2 0 0 1-2-2v-7.500a2 2 0 0 1 2-2h11.500a2 2 0 0 1 2 2v7.500" class="iw"/><path d="M1027 14v8l2-1.800 3 .1z" class="iw"/>
<rect x="1052.500" y="12.500" width="6.500" height="9.500" rx="1" class="iw"/><path d="M1055 11v-2.500a1 1 0 0 1 1-1h9a1 1 0 0 1 1 1v7a1 1 0 0 1-1 1h-4" class="iw"/>
<rect x="1085.500" y="7.500" width="13" height="14" rx="1.500" class="iw"/><rect x="1086" y="8" width="4.500" height="13" fill="#eee"/>
<path d="M1128 21.500v-7l7-7 7 7v7h-4v-5.500a3 3 0 0 0-6 0v5.500z" fill="none" stroke="#a5a5a5" stroke-width="1.300"/>
<text class="tab" x="1149" y="19" textLength="49" lengthAdjust="spacingAndGlyphs">Welcome</text>
<path d="M1234 10l-4.500 4.500 4.500 4.500M1243 10l4.500 4.500-4.500 4.500M1240 8l-3 13" fill="none" stroke="#ddd" stroke-width="1.200"/>
<text x="1251" y="19" font-size="12.500" fill="#f2f2f2" textLength="48" lengthAdjust="spacingAndGlyphs">Elements</text>
<rect x="1333" y="7" width="15" height="14" rx="1.500" class="id"/><path d="M1333 10.500h15M1336 13l2 1.800-2 1.800M1340 17h5" class="id"/>
<circle cx="1350" cy="21" r="4.500" fill="#e8504f"/><path d="M1348.500 19.500l3 3M1351.500 19.500l-3 3" stroke="#fff" stroke-width=".8"/>
<text class="tab" x="1354" y="19" textLength="42" lengthAdjust="spacingAndGlyphs">Console</text>
<ellipse cx="1438" cy="15" rx="4" ry="6" class="id"/><path d="M1435 9l-2-3M1441 9l2-3M1434 12l-4-2M1442 12l4-2M1434 15h-4M1442 15h4M1434 18l-4 2M1442 18l4 2" class="id"/>
<text class="tab" x="1451" y="19" textLength="42" lengthAdjust="spacingAndGlyphs">Sources</text>
<path d="M1522.500 12.500c5-4.500 12-4.500 17 0M1525.500 15.500c3.500-3 7.500-3 11 0M1528.500 18.500c1.500-1.500 3.500-1.500 5 0" fill="none" stroke="#ddd" stroke-width="1.400"/><circle cx="1531" cy="21" r="1.400" fill="#ddd"/>
<path d="M1557 17c0-5 3-8 7-8 2 0 3 .8 4 1.500M1562 20l3-7M1570 18l2-7 2 7M1571 16h2.500" fill="none" stroke="#ddd" stroke-width="1.200"/>
<rect x="1595" y="8" width="12" height="13" rx="2.500" class="id"/><circle cx="1601" cy="14.500" r="2.500" class="id"/><path d="M1597 6v2M1601 6v2M1605 6v2M1597 21v2M1601 21v2M1605 21v2M1593 11h2M1593 14.500h2M1593 18h2M1607 11h2M1607 14.500h2M1607 18h2" class="id"/>
<rect x="1628.500" y="7.500" width="15" height="14" rx="2.500" class="id"/><path d="M1628.500 10.500h15" class="id"/>
<path d="M1671 7.500v14M1664 14.500h14" stroke="#ccc" stroke-width="1.300"/>

<!-- breadcrumbs -->
<rect x="1010" y="789" width="763" height="1" fill="#555"/>
<rect x="1010" y="790" width="763" height="23" fill="#282828"/>
<rect x="1010" y="813" width="763" height="1" fill="#555"/>
<rect x="1010" y="790" width="24" height="23" fill="#2e2e2e"/><rect x="1033" y="790" width="1" height="23" fill="#4a4a4a"/>
<polygon points="1024,799 1024,805 1020.500,802" fill="#ccc"/>
<polygon points="1757,799 1757,805 1760.500,802" fill="#aaa"/>
<rect x="1659" y="790" width="89" height="23" fill="#04395e"/>
<text class="d" x="1034" y="806" textLength="100" lengthAdjust="spacingAndGlyphs">e-reporter.reporter</text>
<text class="d" x="1148" y="806" textLength="15" lengthAdjust="spacingAndGlyphs">div</text>
<text class="d" x="1178" y="806" textLength="62" lengthAdjust="spacingAndGlyphs">calcite-shell</text>
<text class="d" x="1254" y="806" textLength="221" lengthAdjust="spacingAndGlyphs">calcite-panel.width-full.calcite-mode-light</text>
<text class="d" x="1488" y="806" textLength="61" lengthAdjust="spacingAndGlyphs">calcite-flow</text>
<text class="d" x="1563" y="806" textLength="89" lengthAdjust="spacingAndGlyphs">calcite-flow-item</text>
<text class="d" x="1666" y="806" textLength="73" lengthAdjust="spacingAndGlyphs">calcite-button</text>

<!-- drawer -->
<rect x="1010" y="814" width="763" height="33" fill="#2c2c2c"/>
<rect x="1017" y="816" width="62" height="28" rx="2" fill="#202020"/>
<text x="1026.500" y="835" font-size="12.500" fill="#c0dff5" textLength="42.500" lengthAdjust="spacingAndGlyphs">Console</text>
<text class="tab" x="1088" y="835" textLength="32" lengthAdjust="spacingAndGlyphs">Issues</text>
<path d="M1146 823v14M1139 830h14" stroke="#bbb" stroke-width="1.300"/>
<rect x="1010" y="846" width="763" height="31" fill="#2c2c2c"/>
<rect x="1010" y="877" width="763" height="1" fill="#555"/>
<rect x="1020.500" y="856.500" width="18" height="12" rx="1.500" fill="#1e1e1e" stroke="#eee" stroke-width="1"/><rect x="1020.500" y="856.500" width="7.500" height="12" fill="#eee"/><path d="M1029.500 862.500h4.500M1032 860.500l2.500 2-2.500 2" fill="none" stroke="#ddd" stroke-width="1"/>
<circle cx="1060" cy="863" r="7.500" fill="none" stroke="#ccc" stroke-width="1.200"/><path d="M1054.700 868.300l10.600-10.600" stroke="#ccc" stroke-width="1.200"/>
<rect x="1076" y="850" width="89" height="24" rx="2" fill="#3b3b3b"/>
<text x="1084" y="867" font-size="12.500" fill="#f0f0f0" textLength="55.500" lengthAdjust="spacingAndGlyphs">index.html</text>
<polygon points="1146,860 1156,860 1151,865.500" fill="#f0f0f0"/>
<path d="M1175.500 863.500c3-5 12-5 15 0" fill="none" stroke="#ccc" stroke-width="1.200"/><circle cx="1183" cy="863" r="3" fill="none" stroke="#ccc" stroke-width="1.100"/>
<rect x="1203" y="850" width="118" height="24" rx="12" fill="#323232"/>
<path d="M1213 858h9M1214.500 862h6M1216 866h3" stroke="#999" stroke-width="1.100"/>
<text x="1230" y="867" font-size="12.500" fill="#8a8a8a" textLength="27" lengthAdjust="spacingAndGlyphs">Filter</text>
<text x="1335" y="867" font-size="12.500" fill="#f0f0f0" textLength="70" lengthAdjust="spacingAndGlyphs">Default levels</text>
<polygon points="1412,860 1422,860 1417,865.500" fill="#f0f0f0"/>
<path d="M1440.500 858a2 2 0 0 1 2-2h5a2 2 0 0 1 2 2v6a3 3 0 0 1-3 3h-2.500a3.500 3.500 0 0 1-3.500-3.500z" fill="#4d8fd8"/><circle cx="1445" cy="861" r="1.800" fill="#1c3a5e"/>
<text x="1455" y="867" font-size="12.500" fill="#e0e0e0" textLength="21" lengthAdjust="spacingAndGlyphs">99+</text>
<text x="1489" y="867" font-size="12.500" fill="#8f8f8f" textLength="47" lengthAdjust="spacingAndGlyphs">5 hidden</text>
<circle cx="1553" cy="862.500" r="2.800" fill="none" stroke="#ccc" stroke-width="1.100"/><circle cx="1553" cy="862.500" r="6.500" fill="none" stroke="#ccc" stroke-width="1.200" stroke-dasharray="3 1.500"/>
<path d="M1023 885l3.500 5-3.500 5" fill="none" stroke="#4a89c8" stroke-width="1.200"/>
</svg>
</body></html>
